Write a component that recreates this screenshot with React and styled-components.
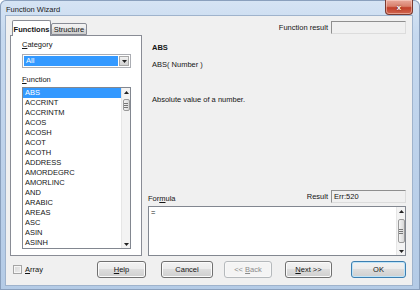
import React from 'react';
import styled, { createGlobalStyle } from 'styled-components';

const GlobalStyle = createGlobalStyle`
  html, body { margin: 0; padding: 0; background: #fff; }
  body {
    font-family: "Liberation Sans", Arial, sans-serif;
    font-size: 7.5px;
    color: #151515;
  }
  * { box-sizing: border-box; }
`;

const Frame = styled.div`
  width: 420px;
  height: 290px;
  display: flex;
  flex-direction: column;
  padding: 0 7px 5px 5px;
  background: linear-gradient(180deg, #d6e4f4 0%, #c6d9ef 12%, #bcd1ea 60%, #b4cbe6 100%);
  box-shadow: inset 0 0 0 1px #8aa0bd;
  border-radius: 6px 6px 0 0;
`;

const TitleBar = styled.div`
  height: 18px;
  display: flex;
  align-items: flex-start;
`;

const Title = styled.div`
  padding: 5px 0 0 1px;
  font-size: 7.5px;
  color: #1a1a1a;
`;

const CloseBtn = styled.div`
  margin-left: auto;
  width: 28px;
  height: 15px;
  border: 1px solid #7a3a2f;
  border-top: none;
  border-radius: 0 0 4px 4px;
  background: linear-gradient(180deg, #e9a99b 0%, #d9806c 45%, #c2402a 55%, #d0654e 100%);
  box-shadow: inset 0 0 0 1px rgba(255, 220, 210, 0.5);
  display: flex;
  align-items: center;
  justify-content: center;
  color: #fff;
  font-weight: bold;
  font-size: 8px;
  text-shadow: 0 0 2px #5a1a10;
`;

const Client = styled.div`
  flex: 1;
  display: flex;
  flex-direction: column;
  background: #f0f0f0;
  border: 1px solid #9fb3cc;
  padding: 4px 6px 4px 4px;
`;

const Main = styled.div`
  flex: 1;
  display: flex;
  gap: 6px;
`;

const LeftCol = styled.div`
  width: 132px;
  display: flex;
  flex-direction: column;
`;

const TabStrip = styled.div`
  height: 15px;
  display: flex;
  align-items: flex-end;
  padding-left: 2px;
  position: relative;
  z-index: 1;
`;

const Tab = styled.div`
  width: ${(p) => p.$w}px;
  height: ${(p) => (p.$active ? 16 : 12)}px;
  margin-bottom: ${(p) => (p.$active ? -1 : 0)}px;
  border: 1px solid #898c95;
  border-bottom: ${(p) => (p.$active ? 'none' : '1px solid #898c95')};
  border-radius: 2px 2px 0 0;
  background: ${(p) => (p.$active ? '#fff' : 'linear-gradient(180deg, #f3f3f3 0%, #ebebeb 50%, #dcdcdc 50%, #cfcfcf 100%)')};
  font-weight: ${(p) => (p.$active ? 'bold' : 'normal')};
  display: flex;
  align-items: center;
  justify-content: center;
  padding-top: ${(p) => (p.$active ? 1 : 0)}px;
`;

const TabPanel = styled.div`
  flex: 1;
  display: flex;
  flex-direction: column;
  background: #fff;
  border: 1px solid #898c95;
  padding: 4px 10px 6px 11px;
`;

const FieldLabel = styled.div`
  line-height: 10px;
  margin-top: ${(p) => p.$mt || 0}px;
  u { text-decoration: underline; }
`;

const Combo = styled.div`
  height: 14px;
  margin-top: 4px;
  border: 1px solid #abadb3;
  display: flex;
  padding: 1px;
  background: #fff;
`;

const ComboValue = styled.div`
  flex: 1;
  background: #3399ff;
  color: #fff;
  padding-left: 2px;
  line-height: 10px;
`;

const ComboButton = styled.div`
  width: 10px;
  margin-left: 1px;
  background: linear-gradient(180deg, #f2f2f2 0%, #e0e0e0 50%, #d2d2d2 100%);
  border: 1px solid #a8a8a8;
  display: flex;
  align-items: center;
  justify-content: center;
`;

const ListBox = styled.div`
  flex: 1;
  margin-top: 2px;
  border: 1px solid #828790;
  display: flex;
  overflow: hidden;
`;

const Items = styled.div`
  flex: 1;
  overflow: hidden;
`;

const Item = styled.div`
  height: 10px;
  line-height: 10px;
  padding-left: 2px;
  white-space: nowrap;
  background: ${(p) => (p.$selected ? '#3399ff' : 'transparent')};
  color: ${(p) => (p.$selected ? '#fff' : '#151515')};
`;

const VScroll = styled.div`
  width: 9px;
  display: flex;
  flex-direction: column;
  background: #f3f3f3;
  border-left: 1px solid #e6e6e6;
`;

const ScrollArrow = styled.div`
  height: 8px;
  display: flex;
  align-items: center;
  justify-content: center;
`;

const Track = styled.div`
  flex: 1;
  padding-top: ${(p) => p.$offset}px;
`;

const Thumb = styled.div`
  height: ${(p) => p.$h}px;
  margin: 0 0.5px;
  border: 1px solid #9a9a9a;
  border-radius: 2px;
  background: linear-gradient(90deg, #f4f4f4 0%, #e6e6e6 50%, #d8d8d8 100%);
  display: flex;
  align-items: center;
  justify-content: center;
`;

const RightCol = styled.div`
  flex: 1;
  display: flex;
  flex-direction: column;
`;

const ResultRow = styled.div`
  display: flex;
  justify-content: flex-end;
  align-items: center;
  gap: 3px;
  margin-top: ${(p) => p.$mt || 0}px;
`;

const ReadField = styled.div`
  width: 75px;
  height: 13px;
  border: 1px solid #dcdcdc;
  border-top-color: #8f8f8f;
  border-left-color: #8f8f8f;
  background: #f0f0f0;
  padding-left: 2px;
  line-height: 11px;
`;

const FuncName = styled.div`
  font-weight: bold;
  line-height: 10px;
  margin: 9px 0 0 4px;
`;

const InfoText = styled.div`
  line-height: 10px;
  margin: ${(p) => p.$mt}px 0 0 4px;
`;

const Spacer = styled.div`
  flex: 1;
`;

const FormulaHead = styled.div`
  display: flex;
  align-items: flex-end;
  margin-bottom: 3px;
`;

const FormulaLabel = styled.div`
  flex: 1;
  line-height: 10px;
  margin-bottom: -1px;
`;

const FormulaBox = styled.div`
  height: 50px;
  border: 1px solid #828790;
  background: #fff;
  display: flex;
`;

const FormulaText = styled.div`
  flex: 1;
  padding: 1px 2px;
  line-height: 10px;
`;

const Bottom = styled.div`
  height: 25px;
  padding-top: 2px;
  display: flex;
  align-items: center;
`;

const CheckBox = styled.div`
  width: 9px;
  height: 9px;
  margin-left: 3px;
  border: 1px solid #a5a5a5;
  background: linear-gradient(135deg, #d8d8d8 0%, #eeeeee 100%);
  box-shadow: inset 0 0 0 1px #f6f6f6;
`;

const CheckLabel = styled.div`
  margin-left: 3px;
  margin-right: auto;
`;

const Button = styled.div`
  width: ${(p) => p.$w}px;
  margin-left: ${(p) => p.$ml || 0}px;
  height: 17px;
  border-radius: 3px;
  display: flex;
  align-items: center;
  justify-content: center;
  border: 1px solid ${(p) => (p.$disabled ? '#b5b9bc' : p.$default ? '#3c7fb1' : '#707070')};
  color: ${(p) => (p.$disabled ? '#8a8a8a' : '#151515')};
  background: ${(p) =>
    p.$disabled
      ? '#f4f4f4'
      : 'linear-gradient(180deg, #f2f2f2 0%, #ebebeb 50%, #dddddd 50%, #cfcfcf 100%)'};
  box-shadow: inset 0 0 0 1px ${(p) => (p.$default ? '#bfe4f8' : p.$disabled ? '#f8f8f8' : '#fbfbfb')};
`;

const Tri = ({ down }) => (
  <svg width="5" height="3" viewBox="0 0 5 3">
    <path d={down ? 'M0 0 H5 L2.5 3 Z' : 'M0 3 H5 L2.5 0 Z'} fill="#222" />
  </svg>
);

const Grip = () => (
  <svg width="4" height="5" viewBox="0 0 4 5">
    <path d="M0 0.5 H4 M0 2.5 H4 M0 4.5 H4" stroke="#777" strokeWidth="1" />
  </svg>
);

const Scrollbar = ({ offset, thumb }) => (
  <VScroll>
    <ScrollArrow><Tri /></ScrollArrow>
    <Track $offset={offset}>
      <Thumb $h={thumb}><Grip /></Thumb>
    </Track>
    <ScrollArrow><Tri down /></ScrollArrow>
  </VScroll>
);

const functions = [
  'ABS', 'ACCRINT', 'ACCRINTM', 'ACOS', 'ACOSH', 'ACOT', 'ACOTH', 'ADDRESS',
  'AMORDEGRC', 'AMORLINC', 'AND', 'ARABIC', 'AREAS', 'ASC', 'ASIN', 'ASINH',
];

export default function App() {
  return (
    <>
      <GlobalStyle />
      <Frame>
        <TitleBar>
          <Title>Function Wizard</Title>
          <CloseBtn>x</CloseBtn>
        </TitleBar>
        <Client>
          <Main>
            <LeftCol>
              <TabStrip>
                <Tab $active $w={39}>Functions</Tab>
                <Tab $w={36}>Structure</Tab>
              </TabStrip>
              <TabPanel>
                <FieldLabel><u>C</u>ategory</FieldLabel>
                <Combo>
                  <ComboValue>All</ComboValue>
                  <ComboButton><Tri down /></ComboButton>
                </Combo>
                <FieldLabel $mt={7}><u>F</u>unction</FieldLabel>
                <ListBox>
                  <Items>
                    {functions.map((f, i) => (
                      <Item key={f} $selected={i === 0}>{f}</Item>
                    ))}
                  </Items>
                  <Scrollbar offset={3} thumb={12} />
                </ListBox>
              </TabPanel>
            </LeftCol>
            <RightCol>
              <ResultRow $mt={1}>
                <span>Function result</span>
                <ReadField />
              </ResultRow>
              <FuncName>ABS</FuncName>
              <InfoText $mt={7}>ABS( Number )</InfoText>
              <InfoText $mt={25}>Absolute value of a number.</InfoText>
              <Spacer />
              <FormulaHead>
                <FormulaLabel>For<u>m</u>ula</FormulaLabel>
                <ResultRow>
                  <span>Result</span>
                  <ReadField>Err:520</ReadField>
                </ResultRow>
              </FormulaHead>
              <FormulaBox>
                <FormulaText>=</FormulaText>
                <Scrollbar offset={4} thumb={24} />
              </FormulaBox>
            </RightCol>
          </Main>
          <Bottom>
            <CheckBox />
            <CheckLabel><u>A</u>rray</CheckLabel>
            <Button $w={49}><span><u>H</u>elp</span></Button>
            <Button $w={52} $ml={15}>Cancel</Button>
            <Button $w={48} $ml={11} $disabled><span>&lt;&lt; <u>B</u>ack</span></Button>
            <Button $w={47} $ml={13}><span><u>N</u>ext &gt;&gt;</span></Button>
            <Button $w={55} $ml={19} $default>OK</Button>
          </Bottom>
        </Client>
      </Frame>
    </>
  );
}
